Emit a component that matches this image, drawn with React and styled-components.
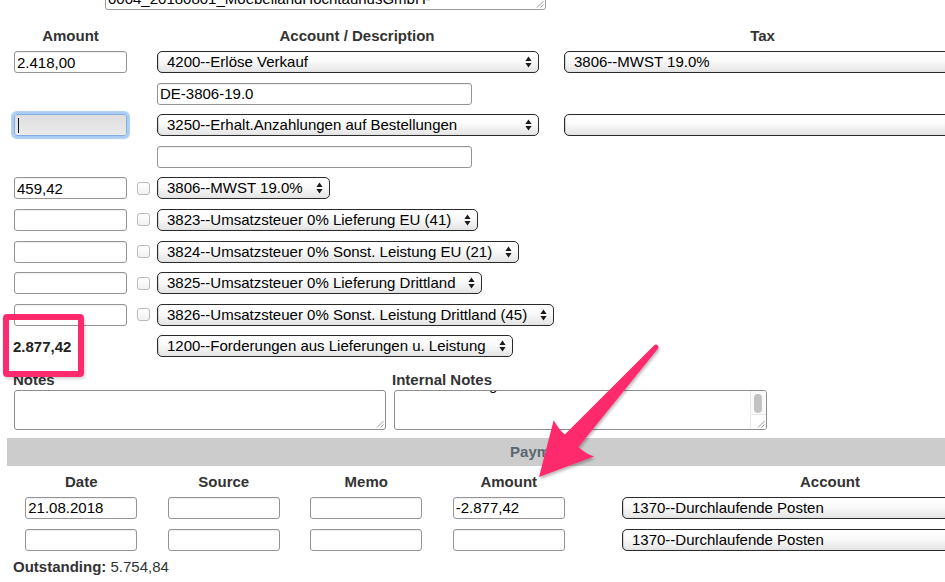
import React from "react";
import styled, { createGlobalStyle } from "styled-components";

const PINK = "#ff2a6d";

const GlobalStyle = createGlobalStyle`
  html, body { margin: 0; padding: 0; background: #fff; overflow: hidden; }
  body {
    font-family: "Liberation Sans", Arial, Helvetica, sans-serif;
    font-size: 15px;
    color: #000;
  }
`;

const Page = styled.div`
  position: relative;
  width: 945px;
  height: 582px;
  overflow: hidden;
  background: #fff;
`;

/* ---------- top (scrolled) textarea ---------- */
const TopNoteWrap = styled.div`
  display: flex;
  align-items: flex-end;
  padding-left: 105px;
  height: 10px;
`;

const TopNote = styled.div`
  position: relative;
  flex-shrink: 0;
  box-sizing: border-box;
  width: 441px;
  height: 40px;
  padding: 19px 0 0 2px;
  border: 1px solid #9a9a9a;
  border-radius: 3px;
  line-height: 18px;
  overflow: hidden;
  white-space: nowrap;
`;

const Grip = styled.svg`
  position: absolute;
  right: 1px;
  bottom: 1px;
`;

const ResizeGrip = () => (
  <Grip width="8" height="8" viewBox="0 0 8 8" aria-hidden="true">
    <path d="M1 7.5 L7.5 1 M4.5 7.5 L7.5 4.5" stroke="#8c8c8c" strokeWidth="0.9" />
  </Grip>
);

/* ---------- line items ---------- */
const LinesGrid = styled.div`
  display: grid;
  grid-template-columns: 113px 30px 400px 411px;
  grid-template-rows: 24px;
  grid-auto-rows: 31.6px;
  margin-top: 17px;
  padding-left: 14px;
  align-items: start;
`;

const HeadCell = styled.div`
  grid-column: ${(p) => p.$col};
  text-align: center;
  font-weight: bold;
  line-height: 18px;
  color: #333;
`;

const Cell = styled.div`
  grid-column: ${(p) => p.$col};
  display: flex;
  align-items: center;
  height: 22px;
  padding-left: ${(p) => p.$pl || 0}px;
`;

const TextInput = styled.input`
  box-sizing: border-box;
  width: ${(p) => p.$w}px;
  height: 22px;
  margin: 0;
  padding: 0 2px;
  border: 1px solid #959595;
  border-radius: 3px;
  background: #fff;
  box-shadow: inset 0 1px 1px rgba(0, 0, 0, 0.07);
  font-family: "Liberation Sans", Arial, Helvetica, sans-serif;
  font-size: 15px;
  color: #000;
  outline: none;
`;

const FocusField = styled.div`
  position: relative;
  box-sizing: border-box;
  width: 113px;
  height: 22px;
  border: 1px solid #86ace0;
  border-radius: 3px;
  background: linear-gradient(#dedede, #ebebeb);
  box-shadow: 0 0 1px 3px rgba(125, 178, 240, 0.65);
  &::after {
    content: "";
    position: absolute;
    left: 3px;
    top: 3px;
    width: 1px;
    height: 15px;
    background: #111;
  }
`;

const CheckBox = styled.span`
  box-sizing: border-box;
  display: block;
  width: 13px;
  height: 13px;
  border: 1px solid #b9b9b9;
  border-radius: 3px;
  background: linear-gradient(#fff, #f1f1f1);
`;

const Total = styled.span`
  font-weight: bold;
  color: #222;
  margin-left: -1px;
`;

const SelectBox = styled.div`
  box-sizing: border-box;
  display: ${(p) => (p.$width ? "flex" : "inline-flex")};
  width: ${(p) => (p.$width ? `${p.$width}px` : "auto")};
  height: 22px;
  align-items: center;
  justify-content: space-between;
  gap: 13px;
  padding: 0 6px 0 9px;
  border: 1px solid #2a2a2a;
  border-radius: 5px;
  background: linear-gradient(#ffffff 0%, #fbfbfb 40%, #e4e4e4 100%);
  box-shadow: inset 1px 0 1px rgba(0, 0, 0, 0.15);
  white-space: nowrap;
  font-size: 15px;
  color: #000;
  flex-shrink: 0;
`;

const SelectText = styled.span`
  line-height: 18px;
`;

const UpDown = () => (
  <svg width="7" height="12" viewBox="0 0 7 12" aria-hidden="true">
    <path d="M0.4 4.9 L3.5 0.4 L6.6 4.9 Z M0.4 7.1 L6.6 7.1 L3.5 11.6 Z" fill="#1b1b1b" />
  </svg>
);

const Select = ({ text, width }) => (
  <SelectBox $width={width}>
    <SelectText>{text}</SelectText>
    <UpDown />
  </SelectBox>
);

const Highlight = styled.div`
  position: absolute;
  left: 3px;
  top: 314px;
  width: 81px;
  height: 63px;
  box-sizing: border-box;
  border: 6px solid ${PINK};
  border-radius: 4px;
  box-shadow: 1px 2px 3px rgba(0, 0, 0, 0.18);
`;

/* ---------- notes ---------- */
const NotesGrid = styled.div`
  display: grid;
  grid-template-columns: 379px 379px;
  padding-left: 13px;
  margin-top: 4px;
`;

const NoteCol = styled.div`
  display: flex;
  flex-direction: column;
`;

const NoteLabel = styled.div`
  font-weight: bold;
  line-height: 18px;
  color: #333;
`;

const NoteBox = styled.div`
  position: relative;
  box-sizing: border-box;
  width: ${(p) => p.$w}px;
  height: 40px;
  margin: 1px 0 0 ${(p) => p.$ml}px;
  border: 1px solid #8d8d8d;
  border-radius: 3px;
  background: #fff;
  overflow: hidden;
`;

const HiddenLine = styled.div`
  position: absolute;
  left: 3px;
  top: -15px;
  line-height: 18px;
  white-space: nowrap;
`;

const ScrollTrack = styled.div`
  position: absolute;
  right: 0;
  top: 0;
  bottom: 0;
  width: 15px;
  border-left: 1px solid #e8e8e8;
  background: #fafafa;
`;

const ScrollThumb = styled.div`
  position: absolute;
  left: 3px;
  top: 3px;
  width: 8px;
  height: 19px;
  border-radius: 4px;
  background: #c3c3c3;
`;

const ScrollCorner = styled.div`
  position: absolute;
  left: 0;
  right: 0;
  bottom: 0;
  height: 14px;
  border-top: 1px solid #e6e6e6;
  background: #fff;
`;

/* ---------- payments ---------- */
const PayBar = styled.div`
  width: 1077px;
  height: 28px;
  margin: 8px 0 0 7px;
  background: #cccccc;
  text-align: center;
  line-height: 28px;
  font-weight: bold;
  color: #5a6771;
`;

const PayGrid = styled.div`
  display: grid;
  grid-template-columns: repeat(4, 142.5px) 500px;
  grid-template-rows: 24px 32px 22px;
  margin-top: 7px;
  padding-left: 10px;
  align-items: start;
`;

const PayCell = styled.div`
  display: flex;
  justify-content: ${(p) => (p.$left ? "flex-start" : "center")};
  padding-left: ${(p) => p.$pl || 0}px;
  height: 22px;
  align-items: center;
`;

const PayHead = styled.div`
  text-align: center;
  font-weight: bold;
  line-height: 18px;
  color: #333;
`;

const Outstanding = styled.div`
  margin-top: 7px;
  padding-left: 13px;
  line-height: 18px;
  color: #333;
`;

const Strong = styled.span`
  font-weight: bold;
`;

/* ---------- annotation arrow ---------- */
const Overlay = styled.svg`
  position: absolute;
  left: 0;
  top: 0;
  pointer-events: none;
`;

const AnnotationArrow = () => (
  <Overlay width="945" height="582" viewBox="0 0 945 582" aria-hidden="true">
    <defs>
      <filter id="sh" x="-20%" y="-20%" width="140%" height="140%">
        <feDropShadow dx="1" dy="2" stdDeviation="1.6" floodColor="#000" floodOpacity="0.3" />
      </filter>
    </defs>
    <path
      d="M539 477 L553.7 420.2 Q559 430 564.8 434.5 L654.2 345.2 A2.6 2.6 0 0 1 657.9 348.8 L578.5 447 Q585 453.5 594 456.4 Z"
      fill={PINK}
      filter="url(#sh)"
    />
  </Overlay>
);

const lineSelects = [
  { amount: "459,42", text: "3806--MWST 19.0%" },
  { amount: "", text: "3823--Umsatzsteuer 0% Lieferung EU (41)" },
  { amount: "", text: "3824--Umsatzsteuer 0% Sonst. Leistung EU (21)" },
  { amount: "", text: "3825--Umsatzsteuer 0% Lieferung Drittland" },
  { amount: "", text: "3826--Umsatzsteuer 0% Sonst. Leistung Drittland (45)" },
];

const payRows = [
  { date: "21.08.2018", amount: "-2.877,42" },
  { date: "", amount: "" },
];

export default function App() {
  return (
    <Page>
      <GlobalStyle />

      <TopNoteWrap>
        <TopNote>
          0004_20180801_MoebellandHochtaunusGmbH-
          <ResizeGrip />
        </TopNote>
      </TopNoteWrap>

      <LinesGrid>
        <HeadCell $col={1}>Amount</HeadCell>
        <HeadCell $col={3}>Account / Description</HeadCell>
        <HeadCell $col={4}>Tax</HeadCell>

        <Cell $col={1}>
          <TextInput $w={113} readOnly value="2.418,00" />
        </Cell>
        <Cell $col={3}>
          <Select width={382} text="4200--Erlöse Verkauf" />
        </Cell>
        <Cell $col={4} $pl={7}>
          <Select width={397} text="3806--MWST 19.0%" />
        </Cell>

        <Cell $col={3}>
          <TextInput $w={315} readOnly value="DE-3806-19.0" />
        </Cell>

        <Cell $col={1}>
          <FocusField />
        </Cell>
        <Cell $col={3}>
          <Select width={382} text="3250--Erhalt.Anzahlungen auf Bestellungen" />
        </Cell>
        <Cell $col={4} $pl={7}>
          <Select width={397} text="" />
        </Cell>

        <Cell $col={3}>
          <TextInput $w={315} readOnly value="" />
        </Cell>

        {lineSelects.map((r) => (
          <React.Fragment key={r.text}>
            <Cell $col={1}>
              <TextInput $w={113} readOnly value={r.amount} />
            </Cell>
            <Cell $col={2} $pl={10}>
              <CheckBox />
            </Cell>
            <Cell $col={3}>
              <Select text={r.text} />
            </Cell>
          </React.Fragment>
        ))}

        <Cell $col={1}>
          <Total>2.877,42</Total>
        </Cell>
        <Cell $col={3}>
          <Select text="1200--Forderungen aus Lieferungen u. Leistung" />
        </Cell>
      </LinesGrid>

      <NotesGrid>
        <NoteCol>
          <NoteLabel>Notes</NoteLabel>
          <NoteBox $w={372} $ml={1}>
            <ResizeGrip />
          </NoteBox>
        </NoteCol>
        <NoteCol>
          <NoteLabel>Internal Notes</NoteLabel>
          <NoteBox $w={373} $ml={2}>
            <HiddenLine>Vorauszahlung</HiddenLine>
            <ScrollTrack>
              <ScrollThumb />
              <ScrollCorner>
                <ResizeGrip />
              </ScrollCorner>
            </ScrollTrack>
          </NoteBox>
        </NoteCol>
      </NotesGrid>

      <PayBar>Payments</PayBar>

      <PayGrid>
        <PayHead>Date</PayHead>
        <PayHead>Source</PayHead>
        <PayHead>Memo</PayHead>
        <PayHead>Amount</PayHead>
        <PayHead>Account</PayHead>
        {payRows.map((r, i) => (
          <React.Fragment key={i}>
            <PayCell>
              <TextInput $w={112} readOnly value={r.date} />
            </PayCell>
            <PayCell>
              <TextInput $w={112} readOnly value="" />
            </PayCell>
            <PayCell>
              <TextInput $w={112} readOnly value="" />
            </PayCell>
            <PayCell>
              <TextInput $w={112} readOnly value={r.amount} />
            </PayCell>
            <PayCell $left $pl={42}>
              <Select width={420} text="1370--Durchlaufende Posten" />
            </PayCell>
          </React.Fragment>
        ))}
      </PayGrid>

      <Outstanding>
        <Strong>Outstanding:</Strong> 5.754,84
      </Outstanding>

      <Highlight />
      <AnnotationArrow />
    </Page>
  );
}
